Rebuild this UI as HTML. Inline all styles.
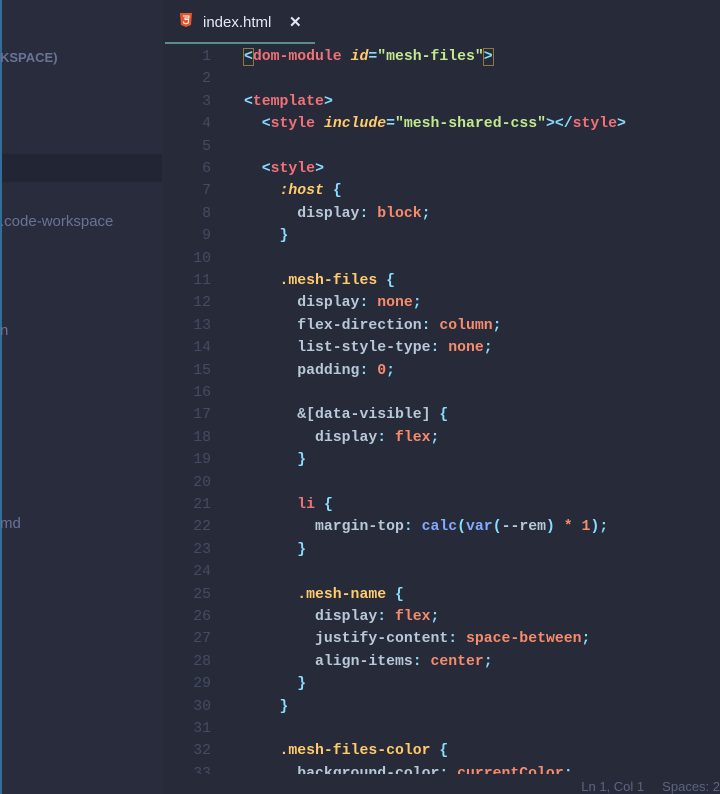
<!DOCTYPE html>
<html><head><meta charset="utf-8"><style>
html,body{margin:0;width:720px;height:794px;overflow:hidden}
body{background:#282b3b;position:relative;font-family:"Liberation Sans",sans-serif}
.side{position:absolute;left:0;top:0;width:163px;height:794px;background:#292c3d;border-left:2px solid #2f6f9a;box-sizing:border-box}
.st{position:absolute;left:0;color:#6a7396;font-size:14px}
.sel{position:absolute;left:0;top:154px;width:160px;height:28px;background:#222533}
.ed{position:absolute;left:163px;top:0;right:0;bottom:0;background:#262a39}
.tab{position:absolute;left:2px;top:0;width:150px;height:42px;border-bottom:2px solid #5d8c8c}
.tab span{position:absolute;left:38px;top:14px;color:#e6e8f0;font-size:15px}
.tab i{position:absolute;left:124px;top:13px;color:#e6e8f0;font-style:normal;font-size:15px;font-weight:bold}
.code{position:absolute;left:0;top:46px;font-family:"Liberation Mono",monospace;font-size:14.8px;line-height:22.4px;white-space:pre;font-weight:bold}
.ln{position:absolute;left:0;width:48px;text-align:right;color:#454b62;font-weight:normal}
.c{position:absolute;left:81px;color:#b7c5d3}
.t{color:#f07178}.b{color:#89ddff}.a{color:#ffcb6b;font-style:italic}.s{color:#c3e88d}.p{color:#b7c8d8}.v{color:#f78c6c}.y{color:#ffcb6b}.f{color:#82aaff}
.status{position:absolute;right:0;top:779px;color:#5c6482;font-size:13px}
</style></head><body>
<div class="side">
<div class="st" style="top:50px;font-weight:bold;font-size:13px;left:-2px">KSPACE)</div>
<div class="sel"></div>
<div class="st" style="top:213px;left:-2px;font-size:15px">.code-workspace</div>
<div class="st" style="top:322px;left:-2px;font-size:15px">n</div>
<div class="st" style="top:515px;left:-2px;font-size:15px">md</div>
</div>
<div class="ed">
<div class="tab"><svg style="position:absolute;left:15px;top:13px" width="12" height="14" viewBox="0 0 12 14"><path d="M0 0h12l-1 12-5 2-5-2z" fill="#e4572e"/><path d="M3 3h6l-.2 2H5l.1 1.5h3.5L8.3 10 6 10.8 3.7 10l-.1-1.5" fill="none" stroke="#fff" stroke-width="1"/></svg><span>index.html</span><i>✕</i></div>
<div class="code">
<div class="ln" style="top:0">1</div><div class="c" style="top:0"><span class="b" style="outline:1px solid #8a7a40">&lt;</span><span class="t">dom-module</span> <span class="a">id</span><span class="b">=</span><span class="s">"mesh-files"</span><span class="b" style="outline:1px solid #8a7a40">&gt;</span></div>
<div class="ln" style="top:22.4px">2</div>
<div class="ln" style="top:44.8px">3</div><div class="c" style="top:44.8px"><span class="b">&lt;</span><span class="t">template</span><span class="b">&gt;</span></div>
<div class="ln" style="top:67.2px">4</div><div class="c" style="top:67.2px">  <span class="b">&lt;</span><span class="t">style</span> <span class="a">include</span><span class="b">=</span><span class="s">"mesh-shared-css"</span><span class="b">&gt;&lt;/</span><span class="t">style</span><span class="b">&gt;</span></div>
<div class="ln" style="top:89.6px">5</div>
<div class="ln" style="top:112px">6</div><div class="c" style="top:112px">  <span class="b">&lt;</span><span class="t">style</span><span class="b">&gt;</span></div>
<div class="ln" style="top:134.4px">7</div><div class="c" style="top:134.4px">    <span class="a">:host</span> <span class="b">{</span></div>
<div class="ln" style="top:156.8px">8</div><div class="c" style="top:156.8px">      <span class="p">display</span><span class="b">:</span> <span class="v">block</span><span class="b">;</span></div>
<div class="ln" style="top:179.2px">9</div><div class="c" style="top:179.2px">    <span class="b">}</span></div>
<div class="ln" style="top:201.6px">10</div>
<div class="ln" style="top:224px">11</div><div class="c" style="top:224px">    <span class="y">.mesh-files</span> <span class="b">{</span></div>
<div class="ln" style="top:246.4px">12</div><div class="c" style="top:246.4px">      <span class="p">display</span><span class="b">:</span> <span class="v">none</span><span class="b">;</span></div>
<div class="ln" style="top:268.8px">13</div><div class="c" style="top:268.8px">      <span class="p">flex-direction</span><span class="b">:</span> <span class="v">column</span><span class="b">;</span></div>
<div class="ln" style="top:291.2px">14</div><div class="c" style="top:291.2px">      <span class="p">list-style-type</span><span class="b">:</span> <span class="v">none</span><span class="b">;</span></div>
<div class="ln" style="top:313.6px">15</div><div class="c" style="top:313.6px">      <span class="p">padding</span><span class="b">:</span> <span class="v">0</span><span class="b">;</span></div>
<div class="ln" style="top:336px">16</div>
<div class="ln" style="top:358.4px">17</div><div class="c" style="top:358.4px">      <span class="p">&amp;[data-visible]</span> <span class="b">{</span></div>
<div class="ln" style="top:380.8px">18</div><div class="c" style="top:380.8px">        <span class="p">display</span><span class="b">:</span> <span class="v">flex</span><span class="b">;</span></div>
<div class="ln" style="top:403.2px">19</div><div class="c" style="top:403.2px">      <span class="b">}</span></div>
<div class="ln" style="top:425.6px">20</div>
<div class="ln" style="top:448px">21</div><div class="c" style="top:448px">      <span class="t">li</span> <span class="b">{</span></div>
<div class="ln" style="top:470.4px">22</div><div class="c" style="top:470.4px">        <span class="p">margin-top</span><span class="b">:</span> <span class="f">calc</span><span class="b">(</span><span class="f">var</span><span class="b">(</span><span class="p">--rem</span><span class="b">)</span> <span class="v">*</span> <span class="v">1</span><span class="b">);</span></div>
<div class="ln" style="top:492.8px">23</div><div class="c" style="top:492.8px">      <span class="b">}</span></div>
<div class="ln" style="top:515.2px">24</div>
<div class="ln" style="top:537.6px">25</div><div class="c" style="top:537.6px">      <span class="y">.mesh-name</span> <span class="b">{</span></div>
<div class="ln" style="top:560px">26</div><div class="c" style="top:560px">        <span class="p">display</span><span class="b">:</span> <span class="v">flex</span><span class="b">;</span></div>
<div class="ln" style="top:582.4px">27</div><div class="c" style="top:582.4px">        <span class="p">justify-content</span><span class="b">:</span> <span class="v">space-between</span><span class="b">;</span></div>
<div class="ln" style="top:604.8px">28</div><div class="c" style="top:604.8px">        <span class="p">align-items</span><span class="b">:</span> <span class="v">center</span><span class="b">;</span></div>
<div class="ln" style="top:627.2px">29</div><div class="c" style="top:627.2px">      <span class="b">}</span></div>
<div class="ln" style="top:649.6px">30</div><div class="c" style="top:649.6px">    <span class="b">}</span></div>
<div class="ln" style="top:672px">31</div>
<div class="ln" style="top:694.4px">32</div><div class="c" style="top:694.4px">    <span class="y">.mesh-files-color</span> <span class="b">{</span></div>
<div class="ln" style="top:716.8px">33</div><div class="c" style="top:716.8px">      <span class="p">background-color</span><span class="b">:</span> <span class="v">currentColor</span><span class="b">;</span></div>
</div>
<div style="position:absolute;left:0;right:0;top:774px;height:20px;background:#262a39"></div>
</div>
<div class="status">Ln 1, Col 1&nbsp;&nbsp;&nbsp;&nbsp;&nbsp;Spaces: 2</div>
</body></html>
